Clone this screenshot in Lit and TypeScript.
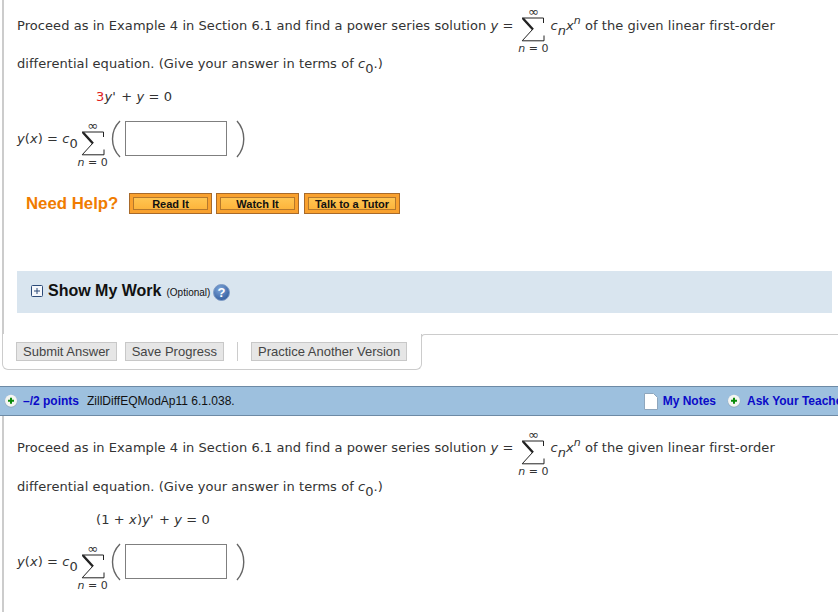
import { LitElement, html, css } from "lit";
import { customElement } from "lit/decorators.js";

const plusIcon = html`<svg class="round" viewBox="0 0 14 14" width="14" height="14" aria-hidden="true">
  <circle cx="7" cy="7.4" r="6.3" fill="#8b9aa8" opacity=".55"></circle>
  <circle cx="7" cy="6.8" r="6" fill="#f4f5f2"></circle>
  <path d="M7 3.8v6M4 6.8h6" stroke="#0a8a0a" stroke-width="2"></path>
</svg>`;

const sum = () => html`<span class="sum">
  <span class="inf">∞</span>
  <svg class="sigma" viewBox="0 0 24 25" width="24" height="25" aria-hidden="true">
    <path d="M1 1H22.5V6M1.2 1L11.5 12.5L1.2 23.8H23V18.5" fill="none" stroke="#222" stroke-width="1"></path>
    <path d="M2 1.5L12 12.5" fill="none" stroke="#222" stroke-width="2.4"></path>
  </svg>
  <span class="lim"><i>n</i> = 0</span>
</span>`;

@customElement("app-root")
export class AppRoot extends LitElement {
  static styles = css`
    :host {
      display: block;
      width: 838px;
      height: 612px;
      overflow: hidden;
      background: #fff;
      font-family: "DejaVu Sans", Verdana, sans-serif;
      font-size: 13px;
      color: #333;
    }
    .q {
      border-left: 2px solid #ccc;
      margin-left: 2px;
      padding-left: 13px;
    }
    .first { height: 334px; }
    .second { height: 196px; }
    .line1 {
      display: flex;
      align-items: center;
      height: 50px;
      white-space: pre;
      letter-spacing: .06px;
    }
    .line2 {
      height: 28px;
      line-height: 28px;
      white-space: pre;
      letter-spacing: .06px;
    }
    sub { font-size: 13px; line-height: 0; vertical-align: -5px; }
    sup { font-size: 11px; line-height: 0; vertical-align: 6px; }
    i { font-style: italic; }
    .eq { height: 38px; line-height: 38px; padding-left: 79px; white-space: pre; letter-spacing: .12px; }
    .prime { margin-right: 1px; }
    .red { color: #e02020; }
    .ans { display: flex; align-items: center; height: 45px; white-space: pre; letter-spacing: .06px; }
    .sum {
      display: inline-flex;
      flex-direction: column;
      align-items: center;
      width: 32px;
      color: #333;
      letter-spacing: 0;
      flex: none;
    }
    .inf { font-size: 13px; line-height: 11px; height: 11px; }
    .sigma { display: block; }
    .lim { font-size: 11px; line-height: 13px; height: 13px; white-space: pre; }
    .s1 { margin: 0 1px 0 4px; display: flex; padding-top: 10px; }
    .s2 { display: flex; padding-top: 11px; margin-left: -1px; }
    .pbox { flex: none; display: block; }
    .box {
      width: 100px;
      height: 33px;
      border: 1px solid #7f7f7f;
      background: #fff;
      flex: none;
    }
    .help {
      display: flex;
      align-items: center;
      height: 21px;
      margin: 32px 0 0 9px;
      font-family: "Liberation Sans", Arial, sans-serif;
    }
    .need { font-size: 16.8px; font-weight: 700; color: #f07c00; width: 103px; white-space: pre; }
    .btn {
      box-sizing: border-box;
      height: 21px;
      border: 1px solid #a86a2a;
      background: #f9a12e;
      padding: 3px;
      display: flex;
      flex: none;
    }
    .btn span {
      flex: 1;
      display: flex;
      align-items: center;
      justify-content: center;
      font-size: 11px;
      font-weight: 700;
      color: #111;
      background: linear-gradient(#ffc552, #fdb53c);
      border: 1px solid #b5782c;
      white-space: pre;
    }
    .b1, .b2 { width: 83px; }
    .b2 { margin-left: 4px; }
    .b3 { width: 96px; margin-left: 5px; }
    .work {
      display: flex;
      align-items: center;
      box-sizing: border-box;
      margin-top: 57px;
      margin-right: 6px;
      height: 42px;
      padding: 0 0 2px 14px;
      background: #d9e5ef;
      font-family: "Liberation Sans", Arial, sans-serif;
      color: #111;
    }
    .work b { font-size: 16px; margin-left: 5px; }
    .work small { font-size: 10px; margin: 3px 0 0 5px; font-weight: 400; }
    .exp { display: block; flex: none; }
    .qm { display: block; flex: none; margin: 2px 0 0 3px; }
    .tabrow { display: flex; height: 36px; align-items: flex-start; }
    .tab {
      box-sizing: border-box;
      width: 420px;
      margin-left: 2px;
      height: 36px;
      border: 1px solid #ccc;
      border-top: 0;
      border-radius: 0 0 6px 6px;
      display: flex;
      align-items: center;
      padding: 0 0 1px 13px;
      font-family: "Liberation Sans", Arial, sans-serif;
    }
    .rest {
      flex: 1;
      height: 10px;
      margin-left: -1px;
      border-top: 1px solid #ccc;
      border-left: 1px solid #ccc;
      border-top-left-radius: 4px;
    }
    .gbtn {
      box-sizing: border-box;
      height: 19px;
      padding: 0 6px;
      font-size: 13px;
      line-height: 17px;
      background: #e6e6e6;
      border: 1px solid #c8c8c8;
      color: #444;
      white-space: pre;
    }
    .gap { width: 8px; flex: none; }
    .sep { width: 1px; height: 19px; background: #ccc; margin: 0 13px; flex: none; }
    .bar {
      box-sizing: border-box;
      height: 30px;
      margin-top: 16px;
      background: #9dc0de;
      border-top: 1px solid #6d8aa5;
      border-bottom: 1px solid #6d8aa5;
      display: flex;
      align-items: center;
      font-family: "Liberation Sans", Arial, sans-serif;
      font-size: 12px;
      font-weight: 700;
      color: #0a0ac8;
      overflow: hidden;
      white-space: pre;
    }
    .round { display: block; flex: none; margin-left: 4px; }
    .pts { margin-left: 5px; }
    .code { margin-left: 8px; font-weight: 400; color: #111; }
    .page { display: block; flex: none; margin-left: 409px; }
    .notes { margin-left: 5px; }
    .r2 { margin-left: 7px; }
    .ask { margin-left: 6px; }
    .spacer { height: 6px; }
    .second .line1 { margin-bottom: 1px; }
    .second .s1 { padding-top: 12px; }
  `;

  private answer() {
    return html`<div class="ans">
      <span><i>y</i>(<i>x</i>) = <i>c</i><sub>0</sub></span>
      <span class="s2">${sum()}</span>
      <svg class="pbox" width="16" height="38" viewBox="0 0 16 38" aria-hidden="true"><path d="M11 1C1 11 1 27 11 37" fill="none" stroke="#666" stroke-width="1.4"></path></svg>
      <span class="box"></span>
      <svg class="pbox" width="18" height="38" viewBox="0 0 18 38" aria-hidden="true"><path d="M10 1C19 11 19 27 10 37" fill="none" stroke="#666" stroke-width="1.4"></path></svg>
    </div>`;
  }

  private prompt() {
    return html`<div class="line1">
        <span>Proceed as in Example 4 in Section 6.1 and find a power series solution <i>y</i> =</span>
        <span class="s1">${sum()}</span>
        <span><i>c<sub>n</sub></i><i>x</i><sup><i>n</i></sup> of the given linear first-order</span>
      </div>
      <div class="line2">differential equation. (Give your answer in terms of <i>c</i><sub>0</sub>.)</div>`;
  }

  render() {
    return html`
      <div class="q first">
        ${this.prompt()}
        <div class="eq"><span class="red">3</span><i>y</i><span class="prime">'</span> + <i>y</i> = 0</div>
        ${this.answer()}
        <div class="help">
          <span class="need">Need Help?</span>
          <div class="btn b1"><span>Read It</span></div>
          <div class="btn b2"><span>Watch It</span></div>
          <div class="btn b3"><span>Talk to a Tutor</span></div>
        </div>
        <div class="work">
          <svg class="exp" width="12" height="12" viewBox="0 0 12 12" aria-hidden="true"><rect x=".5" y=".5" width="11" height="11" rx="1" fill="#f4f7fb" stroke="#2c4a78"></rect><path d="M3 6h6M6 3v6" stroke="#2c4a78"></path></svg>
          <b>Show My Work</b><small>(Optional)</small>
          <svg class="qm" width="17" height="17" viewBox="0 0 17 17" aria-hidden="true">
            <defs><radialGradient id="qg" cx=".4" cy=".3" r=".8"><stop offset="0" stop-color="#7ea6da"></stop><stop offset="1" stop-color="#2a5698"></stop></radialGradient></defs>
            <circle cx="8.5" cy="8.5" r="8" fill="url(#qg)" stroke="#7f9cc6"></circle>
            <text x="8.5" y="13" text-anchor="middle" font-family="Liberation Sans" font-weight="700" font-size="13" fill="#fff">?</text>
          </svg>
        </div>
      </div>
      <div class="tabrow">
        <div class="tab">
          <span class="gbtn">Submit Answer</span><span class="gap"></span>
          <span class="gbtn">Save Progress</span><span class="sep"></span>
          <span class="gbtn">Practice Another Version</span>
        </div>
        <div class="rest"></div>
      </div>
      <div class="bar">
        ${plusIcon}
        <span class="pts">–/2 points</span>
        <span class="code">ZillDiffEQModAp11 6.1.038.</span>
        <svg class="page" width="14" height="17" viewBox="0 0 14 17" aria-hidden="true"><path d="M.5.5H9.5L13.5 4.5V16.5H.5Z" fill="#fff" stroke="#8ea6bd"></path></svg>
        <span class="notes">My Notes</span>
        <span class="r2">${plusIcon}</span>
        <span class="ask">Ask Your Teacher</span>
      </div>
      <div class="q second">
        <div class="spacer"></div>
        ${this.prompt()}
        <div class="eq">(1 + <i>x</i>)<i>y</i><span class="prime">'</span> + <i>y</i> = 0</div>
        ${this.answer()}
      </div>
    `;
  }
}
